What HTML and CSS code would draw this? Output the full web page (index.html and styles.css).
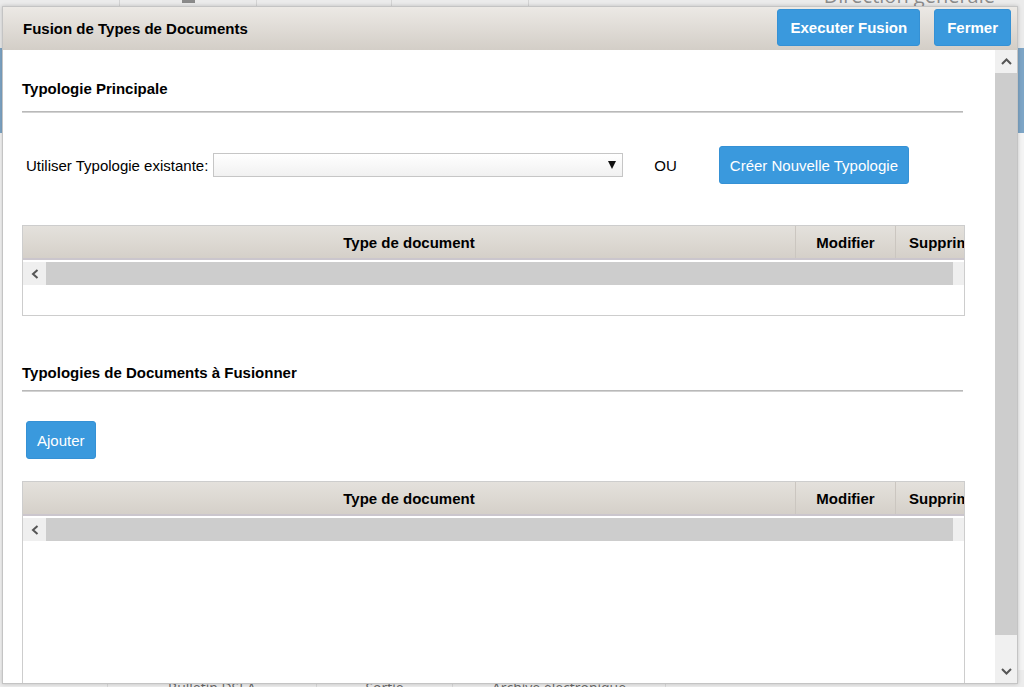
FILE: index.html
```html
<!DOCTYPE html>
<html>

<head>
  <meta charset="utf-8">
  <meta name="viewport" content="width=device-width, initial-scale=1">
  <link rel="stylesheet" href="styles.css">
</head>

<body>
  <!-- page behind the dialog -->
  <div class="page">
    <div class="page-top">
      <span class="page-tab tab1"></span>
      <span class="page-tab tab2"><span class="tab-icon"></span></span>
      <span class="page-tab tab3"></span>
      <span class="page-tab tab4"></span>
      <span class="brand">Direction générale</span>
    </div>
    <div class="page-band"></div>
    <div class="page-main"></div>
    <div class="page-row">
      <span class="cell cell0"></span>
      <span class="cell cell1">Bulletin DSEA</span>
      <span class="cell cell2">Sortie</span>
      <span class="cell cell3">Archive électronique</span>
    </div>
  </div>

  <!-- dialog -->
  <div class="dialog">
    <div class="dialog-title">
      <span>Fusion de Types de Documents</span>
      <span class="title-actions">
        <button class="btn btn-bold">Executer Fusion</button>
        <button class="btn btn-bold">Fermer</button>
      </span>
    </div>

    <div class="dialog-body">
      <div class="dialog-content">
        <h3 class="section-title">Typologie Principale</h3>
        <hr class="rule">

        <div class="choose-row">
          <label class="choose-label">Utiliser Typologie existante:</label>
          <div class="select">
            <svg width="8" height="8" viewBox="0 0 8 8"><polygon points="0,0 8,0 4,8" fill="#111"/></svg>
          </div>
          <span class="or">OU</span>
          <button class="btn btn-create">Créer Nouvelle Typologie</button>
        </div>

        <div class="grid grid-short">
          <div class="grid-head">
            <div class="col-type">Type de document</div>
            <div class="col-edit">Modifier</div>
            <div class="col-del">Supprimer</div>
          </div>
          <div class="hscroll">
            <span class="hs-arrow">
              <svg width="8" height="10" viewBox="0 0 8 10"><polyline points="6.5,1 2,5 6.5,9" fill="none" stroke="#555" stroke-width="2"/></svg>
            </span>
            <span class="hs-thumb"></span>
            <span class="hs-track"></span>
          </div>
        </div>

        <h3 class="section-title section-second">Typologies de Documents à Fusionner</h3>
        <hr class="rule rule-tight">

        <button class="btn btn-add">Ajouter</button>

        <div class="grid grid-long">
          <div class="grid-head">
            <div class="col-type">Type de document</div>
            <div class="col-edit">Modifier</div>
            <div class="col-del">Supprimer</div>
          </div>
          <div class="hscroll">
            <span class="hs-arrow">
              <svg width="8" height="10" viewBox="0 0 8 10"><polyline points="6.5,1 2,5 6.5,9" fill="none" stroke="#555" stroke-width="2"/></svg>
            </span>
            <span class="hs-thumb"></span>
            <span class="hs-track"></span>
          </div>
        </div>
      </div>

      <div class="vscroll">
        <span class="vs-arrow">
          <svg width="11" height="7" viewBox="0 0 11 7"><polyline points="1,6 5.5,1.5 10,6" fill="none" stroke="#555" stroke-width="2"/></svg>
        </span>
        <span class="vs-thumb"></span>
        <span class="vs-track"></span>
        <span class="vs-arrow">
          <svg width="11" height="7" viewBox="0 0 11 7"><polyline points="1,1 5.5,5.5 10,1" fill="none" stroke="#555" stroke-width="2"/></svg>
        </span>
      </div>
    </div>
  </div>
</body>

</html>
```

FILE: styles.css
```css
/* ---------- page behind ---------- */
body {
  margin: 0;
  font-family: "Liberation Sans", Arial, sans-serif;
  font-size: 15px;
  color: #000;
  background: #f2f2f2;
}

.page {
  height: 687px;
  overflow: hidden;
  font-family: "Open Sans", sans-serif;
}

.page-top {
  display: flex;
  height: 48px;
  background: #ebebeb;
}

.page-tab {
  border-right: 1px solid #d4d4d4;
}
.tab1 { width: 119px; }
.tab2 { width: 137px; padding-left: 62px; box-sizing: border-box; }
.tab3 { width: 134px; }
.tab4 { width: 136px; }

.tab-icon {
  display: block;
  width: 13px;
  height: 3px;
  background: #8a8a8a;
}

.brand {
  margin-left: auto;
  margin-right: 29px;
  margin-top: -18px;
  font-size: 20px;
  line-height: 28px;
  color: #8c8c8c;
}

.page-band {
  height: 85px;
  background: #7da5c6;
}

.page-main {
  height: 537px;
  background: #f4f4f4;
}

.page-row {
  display: flex;
  height: 40px;
  padding-top: 8px;
  background: #ececec;
  font-size: 14px;
  line-height: 20px;
  color: #666;
}

.cell {
  text-align: center;
  border-left: 1px solid #d8d8d8;
}
.cell0 { width: 107px; border-left: 0; }
.cell1 { width: 208px; }
.cell2 { width: 135px; }
.cell3 { width: 212px; border-right: 1px solid #d8d8d8; }

/* ---------- dialog ---------- */
.dialog {
  position: absolute;
  left: 2px;
  top: 6px;
  width: 1016px;
  height: 678px;
  box-sizing: border-box;
  border: 1px solid #c4c4c4;
  background: #fff;
  display: flex;
  flex-direction: column;
  box-shadow: 0 0 4px rgba(0, 0, 0, .2);
}

.dialog-title {
  display: flex;
  align-items: center;
  justify-content: space-between;
  flex: none;
  height: 43px;
  padding: 0 6px 0 20px;
  background: linear-gradient(#ece9e5, #d3cec7);
  font-weight: bold;
}

.title-actions {
  align-self: flex-start;
  display: flex;
  gap: 14px;
  margin-top: 2px;
}

.btn {
  display: block;
  height: 38px;
  padding: 0 10px;
  border: 1px solid #3591d5;
  border-radius: 3px;
  background: #3a99dd;
  color: #fff;
  font: 15px "Liberation Sans", Arial, sans-serif;
}

.btn-bold {
  height: 37px;
  padding: 0 12px;
  font-weight: bold;
}

.dialog-body {
  flex: 1;
  display: flex;
  min-height: 0;
}

.dialog-content {
  flex: 1;
  overflow: hidden;
  padding: 30px 30px 0 19px;
}

.section-title {
  margin: 0;
  font-size: 15px;
  line-height: 18px;
}

.section-second {
  margin-top: 48px;
}

.rule {
  height: 0;
  margin: 13px 2px 0 0;
  border: 0;
  border-top: 1px solid #b9b9b9;
  border-bottom: 1px solid #d2d2d2;
}

.rule-tight {
  margin-top: 8px;
}

.choose-row {
  display: flex;
  align-items: center;
  height: 38px;
  margin-top: 33px;
}

.choose-label {
  margin-left: 4px;
}

.select {
  display: flex;
  align-items: center;
  justify-content: flex-end;
  box-sizing: border-box;
  width: 410px;
  height: 24px;
  margin-left: 5px;
  padding-right: 6px;
  border: 1px solid #c6c6c6;
  background: linear-gradient(#fff, #f1f1f1);
}

.or {
  margin-left: 31px;
}

.btn-create {
  margin-left: 42px;
}

.btn-add {
  margin: 29px 0 0 4px;
}

/* ---------- grids ---------- */
.grid {
  border: 1px solid #cdcdcd;
  overflow: hidden;
}

.grid-short {
  height: 89px;
  margin-top: 41px;
}

.grid-long {
  height: 320px;
  margin-top: 22px;
}

.grid-head {
  display: flex;
  height: 32px;
  background: linear-gradient(#e4e1dc, #d5d0c9);
  border-bottom: 2px solid #cbc6cd;
  font-weight: bold;
}

.grid-head div {
  display: flex;
  align-items: center;
  justify-content: center;
  flex: none;
  white-space: nowrap;
}

.col-type { width: 772px; }

.col-edit {
  width: 99px;
  border-left: 1px solid #cbc6c0;
}

.grid-head .col-del {
  width: 120px;
  padding-left: 13px;
  justify-content: flex-start;
  border-left: 1px solid #cbc6c0;
}

.hscroll {
  display: flex;
  height: 23px;
  margin-top: 2px;
}

.hs-arrow {
  display: flex;
  align-items: center;
  justify-content: center;
  width: 23px;
  background: #efefef;
}

.hs-thumb {
  width: 907px;
  background: #cdcdcd;
}

.hs-track {
  flex: 1;
  background: #efefef;
}

/* ---------- fake vertical scrollbar ---------- */
.vscroll {
  display: flex;
  flex-direction: column;
  width: 22px;
  background: #f0f0f0;
}

.vs-arrow {
  display: flex;
  align-items: center;
  justify-content: center;
  height: 23px;
}

.vs-thumb {
  height: 562px;
  background: #cdcdcd;
}

.vs-track {
  flex: 1;
}
```
